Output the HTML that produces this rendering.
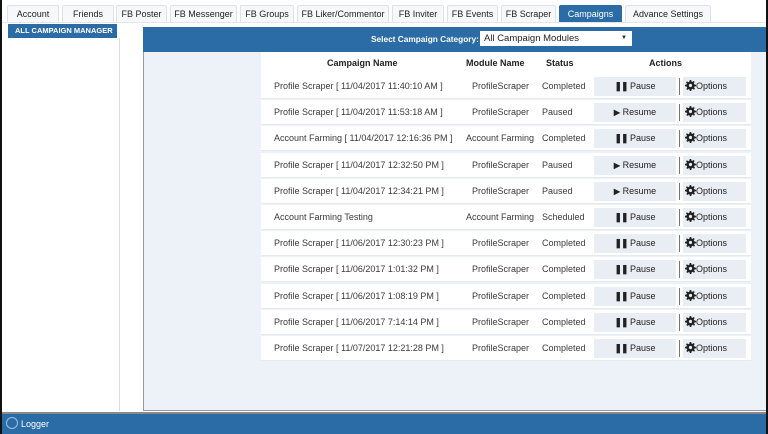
<!DOCTYPE html><html><head><style>
*{margin:0;padding:0;box-sizing:border-box}
body{width:768px;height:434px;background:#fff;font-family:"Liberation Sans",sans-serif;font-size:9px;color:#333;position:relative;overflow:hidden}
.a{position:absolute}
.tab{position:absolute;top:5px;height:18px;border:1px solid #dde2e8;border-bottom:none;background:#f7f8fa;text-align:center;line-height:17px;font-size:9px;color:#222;border-radius:2px 2px 0 0;white-space:nowrap}
.row{position:absolute;left:261px;width:490px;height:25px;background:#fff;border-bottom:1px solid #e6eaee}
.row span{position:absolute;top:0;line-height:25px;white-space:nowrap;color:#3a3a3a}
.btn{position:absolute;top:3px;height:19px;background:#e9eef4;line-height:19px;font-size:9px;color:#222;white-space:nowrap}
</style></head><body>
<div class="a" style="left:0;top:0;width:2px;height:434px;background:#111"></div>
<div class="a" style="right:0;top:0;width:2px;height:434px;background:#111"></div>
<div class="tab" style="left:7px;width:52px">Account</div>
<div class="tab" style="left:62px;width:52px">Friends</div>
<div class="tab" style="left:116px;width:51px">FB Poster</div>
<div class="tab" style="left:170px;width:67px">FB Messenger</div>
<div class="tab" style="left:240px;width:54px">FB Groups</div>
<div class="tab" style="left:297px;width:92px">FB Liker/Commentor</div>
<div class="tab" style="left:392px;width:52px">FB Inviter</div>
<div class="tab" style="left:447px;width:51px">FB Events</div>
<div class="tab" style="left:501px;width:55px">FB Scraper</div>
<div class="tab" style="left:559px;width:63px;background:#2b6ca6;color:#fff;border-color:#2b6ca6">Campaigns</div>
<div class="tab" style="left:625px;width:86px">Advance Settings</div>
<div class="a" style="left:2px;top:22px;width:764px;height:1px;background:#e3e6ea"></div>
<div class="a" style="left:8px;top:24px;width:109px;height:14px;background:#2b6ca6;color:#fff;font-size:7.5px;line-height:14px;padding-left:7px;font-weight:bold;white-space:nowrap">ALL CAMPAIGN MANAGER</div>
<div class="a" style="left:119px;top:38px;width:1px;height:373px;background:#dcdcdc"></div>
<div class="a" style="left:143px;top:27px;width:623px;height:384px;background:#edf2f8;border-left:1px solid #9a9a9a;border-bottom:1px solid #9a9a9a"></div>
<div class="a" style="left:143px;top:27px;width:623px;height:25px;background:#2b6ca6"></div>
<div class="a" style="left:371px;top:27px;line-height:25px;color:#fff;font-weight:bold;font-size:8.3px;white-space:nowrap">Select Campaign Category:</div>
<div class="a" style="left:480px;top:31px;width:152px;height:15px;background:#fff;line-height:15px;padding-left:4px;font-size:9.5px;color:#222">All Campaign Modules<span style="position:absolute;right:5px;font-size:6px">▼</span></div>
<div class="a" style="left:261px;top:52px;width:490px;height:22px;background:#fff;font-weight:bold;color:#222">
<span class="a" style="left:66px;line-height:22px">Campaign Name</span>
<span class="a" style="left:205px;line-height:22px">Module Name</span>
<span class="a" style="left:285px;line-height:22px">Status</span>
<span class="a" style="left:388px;line-height:22px">Actions</span></div>
<div id="rows"></div>
<div class="a" style="left:2px;top:412px;width:764px;height:2px;background:#8a8a8a"></div>
<div class="a" style="left:2px;top:414px;width:764px;height:20px;background:#2b6ca6"></div>
<div class="a" style="left:6px;top:417px;width:12px;height:12px;border:1px solid #9cc0e0;border-radius:50%"></div>
<div class="a" style="left:21px;top:414px;line-height:20px;color:#fff;font-size:9px">Logger</div>
<script>
var d=[["Profile Scraper [ 11/04/2017 11:40:10 AM ]","ProfileScraper","Completed",0],
["Profile Scraper [ 11/04/2017 11:53:18 AM ]","ProfileScraper","Paused",1],
["Account Farming [ 11/04/2017 12:16:36 PM ]","Account Farming","Completed",0],
["Profile Scraper [ 11/04/2017 12:32:50 PM ]","ProfileScraper","Paused",1],
["Profile Scraper [ 11/04/2017 12:34:21 PM ]","ProfileScraper","Paused",1],
["Account Farming Testing","Account Farming","Scheduled",0],
["Profile Scraper [ 11/06/2017 12:30:23 PM ]","ProfileScraper","Completed",0],
["Profile Scraper [ 11/06/2017 1:01:32 PM ]","ProfileScraper","Completed",0],
["Profile Scraper [ 11/06/2017 1:08:19 PM ]","ProfileScraper","Completed",0],
["Profile Scraper [ 11/06/2017 7:14:14 PM ]","ProfileScraper","Completed",0],
["Profile Scraper [ 11/07/2017 12:21:28 PM ]","ProfileScraper","Completed",0]];
var gear='<svg width="11" height="11" viewBox="0 0 16 16" style="vertical-align:-2px"><path fill="#222" d="M7 0h2l.4 2.2 1.5.6 1.8-1.3 1.4 1.4-1.3 1.8.6 1.5L16 7v2l-2.2.4-.6 1.5 1.3 1.8-1.4 1.4-1.8-1.3-1.5.6L9 16H7l-.4-2.2-1.5-.6-1.8 1.3-1.4-1.4 1.3-1.8-.6-1.5L0 9V7l2.2-.4.6-1.5-1.3-1.8 1.4-1.4 1.8 1.3 1.5-.6z"/><circle cx="8" cy="8" r="2.3" fill="#e9eef4"/></svg>';
var h='';
d.forEach(function(r,i){var t=74+i*26.2;var c=r[1]=="Account Farming"?'left:205px':'left:211px';
h+='<div class="row" style="top:'+t+'px"><span style="left:13px">'+r[0]+'</span><span style="'+c+'">'+r[1]+'</span><span style="left:281px">'+r[2]+'</span>'+
'<div class="btn" style="left:333px;width:82px;text-align:center">'+(r[3]?'<b style="font-size:8px">▶</b> Resume':'<b style="letter-spacing:-1px">❚❚</b> Pause')+'</div>'+
'<div class="a" style="left:418px;top:4px;width:1px;height:17px;background:#777"></div>'+
'<div class="btn" style="left:422px;width:63px;padding-left:2px">'+gear+'Options</div></div>';});
document.getElementById('rows').innerHTML=h;
</script>
</body></html>
